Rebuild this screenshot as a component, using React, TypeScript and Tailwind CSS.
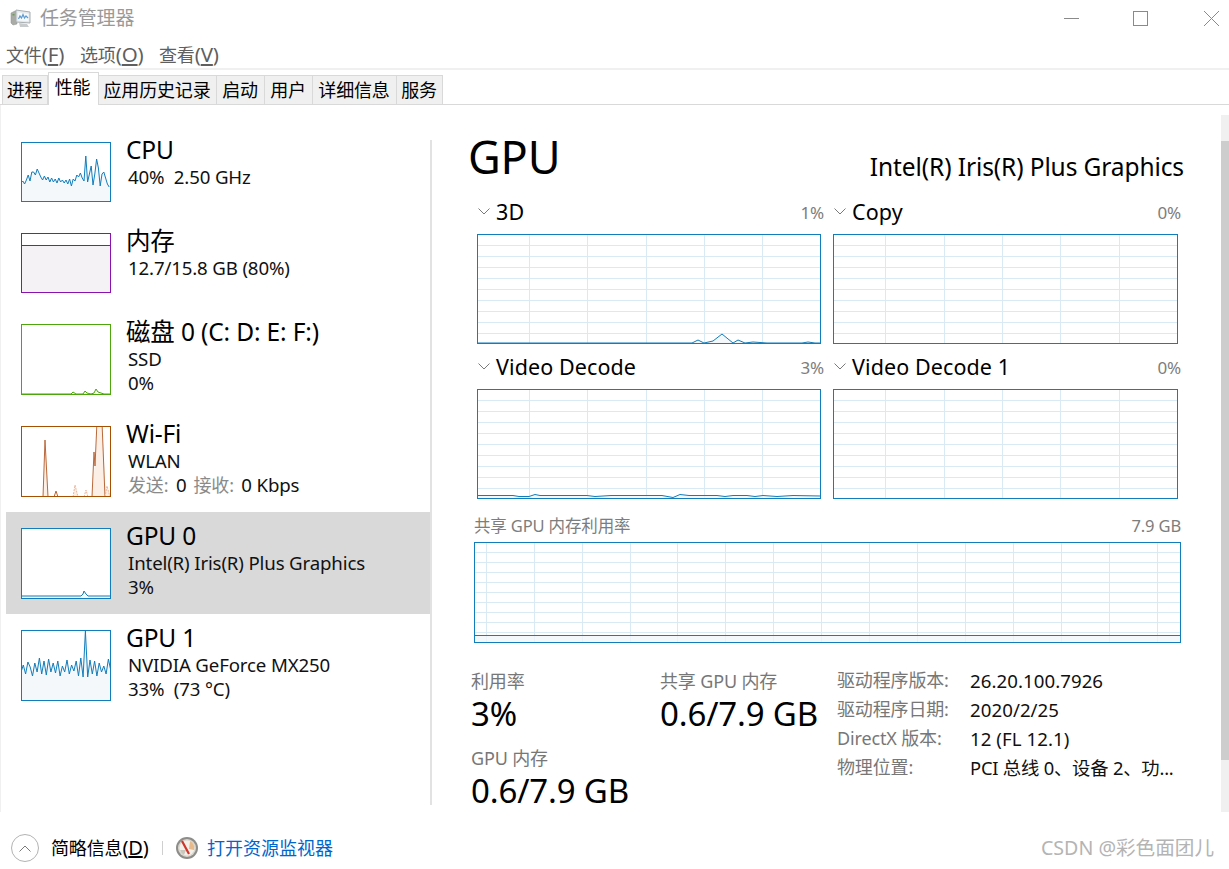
const line = (ys: number[], step: number, x0 = 0) =>
  ys.map((y, i) => `${x0 + i * step},${y}`).join(" ");

interface IGraph {
  w: number;
  h: number;
  color: string;
  fill?: string;
  rows?: number[];
  cols?: number[];
  points?: string;
  children?: React.ReactNode;
}

const Graph = ({ w, h, color, fill, rows = [], cols = [], points, children }: IGraph) => (
  <svg width={w} height={h} viewBox={`0 0 ${w} ${h}`} className="block shrink-0 bg-white">
    {rows.map((y) => (
      <line key={`r${y}`} x1={0} x2={w} y1={y + 0.5} y2={y + 0.5} stroke="#d9eaf4" />
    ))}
    {cols.map((x) => (
      <line key={`c${x}`} y1={0} y2={h} x1={x + 0.5} x2={x + 0.5} stroke="#d9eaf4" />
    ))}
    {points && fill && <polygon points={`0,${h} ${points} ${w},${h}`} fill={fill} fillOpacity={0.75} />}
    {points && <polyline points={points} fill="none" stroke={color} strokeWidth={1} />}
    {children}
    <rect x={0.5} y={0.5} width={w - 1} height={h - 1} fill="none" stroke={color} />
  </svg>
);

const BLUE = "#117dbb";
const PALE = "#f1f6fa";

const cpu = line(
  [41, 39, 42, 38, 33, 39, 30, 30, 33, 27, 31, 35, 38, 34, 38, 35, 40, 36, 40, 37, 41, 36, 40, 38, 41, 38, 42, 37, 44, 37, 39, 33, 35, 31, 36, 39, 14, 40, 32, 24, 43, 32, 17, 26, 44, 32, 30, 36, 42, 45],
  1.8
);
const gpu1 = line(
  [42, 35, 44, 32, 37, 46, 33, 42, 28, 44, 31, 45, 29, 42, 33, 43, 31, 46, 36, 42, 30, 44, 35, 41, 31, 46, 28, 47, 1, 47, 30, 44, 31, 46, 33, 42, 36, 44, 29, 40],
  2.3
);
const disk = "0,70 50,70 52,68 55,70 62,70 64,67 66,69 70,70 73,69 75,65 77,68 80,69 83,70 90,70";
const gpu0 = "0,68 60,68 62,66 63,63 65,66 67,68 90,68";
const threeD =
  "0,109 215,109 221,106 227,109 236,107 245,100 256,109 261,106 268,109 276,108 290,109 325,109 331,108 338,109 344,109";
const vd0 =
  "0,106.500 36,106.500 42,107.500 52,107.500 58,105.500 63,106.500 110,106.500 118,107.500 134,106.500 185,106.500 196,108.500 203,105.500 212,106.500 240,106.500 248,107.500 256,106.500 270,106.500 278,107.500 286,106.500 300,107.500 316,106.500 344,107";

const SIDEBAR: { title: string; lines: React.ReactNode[]; graph: React.ReactNode; selected?: boolean }[] = [
  {
    title: "CPU",
    lines: ["40%  2.50 GHz"],
    graph: <Graph w={90} h={60} color={BLUE} fill={PALE} points={cpu} />,
  },
  {
    title: "内存",
    lines: ["12.7/15.8 GB (80%)"],
    graph: (
      <Graph w={90} h={60} color="#8b12ae">
        <rect x={1} y={12} width={88} height={47} fill="#f4f2f4" />
        <line x1={0} x2={90} y1={12.5} y2={12.5} stroke="#8b12ae" />
      </Graph>
    ),
  },
  {
    title: "磁盘 0 (C: D: E: F:)",
    lines: ["SSD", "0%"],
    graph: <Graph w={90} h={71} color="#4da60c" fill="#eff7e7" points={disk} />,
  },
  {
    title: "Wi-Fi",
    lines: [
      "WLAN",
      <>
        <span className="text-[18px] text-[#8a8a8a]">发送: </span>
        <span className="ml-[3px]">0</span>
        <span className="ml-[7px] text-[18px] text-[#8a8a8a]">接收: </span>
        <span className="ml-[3px]">0 Kbps</span>
      </>,
    ],
    graph: (
      <Graph w={90} h={71} color="#a74f01">
        <polygon points="71,71 74,35 77,0 81,0 85,71" fill="#fcf0e6" />
        <polyline points="22,71 24,14 27,71" fill="#fcf0e6" stroke="#b9683a" />
        <polyline points="71,71 73,26 74,40 76,-4 81,-4 84,71" fill="none" stroke="#b9683a" />
        <polyline points="33,71 35,65 37,71" fill="none" stroke="#b9683a" />
        <polyline points="52,71 54,59 57,71" fill="#fcf0e6" stroke="#e8b59a" strokeDasharray="2 1" />
        <polyline points="63,71 65,64 67,71" fill="none" stroke="#e8b59a" strokeDasharray="2 1" />
        <polyline points="84,71 86,60 89,71" fill="#fcf0e6" stroke="#e8b59a" strokeDasharray="2 1" />
      </Graph>
    ),
  },
  {
    title: "GPU 0",
    lines: ["Intel(R) Iris(R) Plus Graphics", "3%"],
    graph: <Graph w={90} h={71} color={BLUE} fill={PALE} points={gpu0} />,
    selected: true,
  },
  {
    title: "GPU 1",
    lines: ["NVIDIA GeForce MX250", "33%  (73 °C)"],
    graph: <Graph w={90} h={71} color={BLUE} fill={PALE} points={gpu1} />,
  },
];

const TABS = [
  { label: "进程", width: "w-[46px]" },
  { label: "性能", width: "w-[51px]", active: true },
  { label: "应用历史记录", width: "w-[118px]" },
  { label: "启动", width: "w-[48px]" },
  { label: "用户", width: "w-[48px]" },
  { label: "详细信息", width: "w-[84px]" },
  { label: "服务", width: "w-[46px]" },
];

const ROWS11 = [11, 22, 33, 44, 55, 66, 77, 88, 99];
const COLS_L = [52, 110, 169, 227, 285];
const COLS_R = [52, 111, 169, 227, 286];

const ENGINES = [
  { name: "3D", value: "1%", w: 344, head: "w-[347px]", cols: COLS_L, points: threeD, fill: PALE },
  { name: "Copy", value: "0%", w: 345, head: "w-[348px]", cols: COLS_R },
  { name: "Video Decode", value: "3%", w: 344, head: "w-[347px]", cols: COLS_L, points: vd0, fill: PALE },
  { name: "Video Decode 1", value: "0%", w: 345, head: "w-[348px]", cols: COLS_R },
];

const DETAILS = [
  { k: "驱动程序版本:", v: "26.20.100.7926", cn: "text-[18.670px] tracking-[0.05px]" },
  { k: "驱动程序日期:", v: "2020/2/25", cn: "text-[18.670px] tracking-[0.05px]" },
  { k: "DirectX 版本:", v: "12 (FL 12.1)", cn: "text-[18.670px] tracking-[0.05px]" },
  { k: "物理位置:", v: "PCI 总线 0、设备 2、功...", cn: "text-[18.330px] tracking-[-0.2px]" },
];

const AppIcon = () => (
  <svg width="22" height="22" viewBox="0 0 22 22">
    <path d="M1 6 L5 4 L7 4 L7 17 L3 18 L1 16 Z" fill="#a9aca6" stroke="#8b8f88" strokeWidth="0.5" />
    <rect x="2.500" y="7" width="2" height="1.500" fill="#6f9a5c" />
    <path d="M6 3 L20 5 L20 16 L6 15 Z" fill="#e6eaed" stroke="#a8adb1" />
    <path d="M8 5.500 L18.500 7 L18.500 14 L8 13.500 Z" fill="#f6fafd" />
    <polyline points="8.500,12 10,9 11.500,11 13,7.500 14.500,11 16,9 18,11" fill="none" stroke="#5f9bd0" strokeWidth="1.200" />
    <path d="M9 16 L17 17 L19 20 L10 20 Z" fill="#c8cbcd" />
  </svg>
);

const ResMonIcon = () => (
  <svg width="24" height="24" viewBox="0 0 24 24">
    <circle cx="12" cy="12" r="11" fill="#8d8c88" />
    <circle cx="12" cy="12" r="9" fill="#d9d6ce" />
    <circle cx="12" cy="12" r="7.500" fill="#f3f0ea" />
    <path d="M15 5 A7.500 7.500 0 0 1 19 14 L14 13 Z" fill="#e8b98a" />
    <path d="M5 14 A7.500 7.500 0 0 0 9 19 L11 14 Z" fill="#c9c6bc" />
    <path d="M7 5 L14 18" stroke="#d0352a" strokeWidth="2.200" />
  </svg>
);

const Chevron = ({ up, className }: { up?: boolean; className?: string }) => (
  <svg width="12" height="7" viewBox="0 0 12 7" className={className}>
    <polyline points={up ? "0.500,6.500 6,1 11.500,6.500" : "0.500,0.500 6,6 11.500,0.500"} fill="none" stroke="#7a7a7a" />
  </svg>
);

const SidebarRow = ({ title, lines, graph, selected }: (typeof SIDEBAR)[number]) => (
  <div className={`flex gap-[15px] pt-4 pb-[15px] pl-[15px] ${selected ? "bg-[#d9d9d9]" : ""}`}>
    {graph}
    <div className="-mt-[6px] flex flex-col">
      <div className="h-[29px] text-[24.500px] leading-[28px] whitespace-nowrap text-black">{title}</div>
      {lines.map((l, i) => (
        <div key={i} className="ml-[2px] h-6 text-[18.670px] leading-6 whitespace-pre text-[#111]">
          {l}
        </div>
      ))}
    </div>
  </div>
);

const App = () => {
  return (
    <div className="relative h-[869px] w-[1229px] overflow-hidden bg-white font-['Noto_Sans','Noto_Sans_CJK_SC',sans-serif] tracking-[-0.15px]">
      {/* title bar */}
      <div className="flex h-9 items-center pl-[10px]">
        <AppIcon />
        <span className="ml-[8px] text-[19px] text-[#999]">任务管理器</span>
        <div className="ml-auto flex items-center pr-[10px]">
          <div className="h-px w-[15px] bg-[#8a8a8a]" />
          <div className="ml-[54px] h-[15px] w-[15px] border border-[#8a8a8a]" />
          <svg width="15" height="15" viewBox="0 0 15 15" className="ml-[56px]">
            <path d="M0 0 L15 15 M15 0 L0 15" stroke="#8a8a8a" />
          </svg>
        </div>
      </div>

      {/* menu */}
      <div className="flex h-[34px] items-center border-b-2 border-[#f0f0f0] pt-[4px] pl-[6px] text-[20.500px] text-[#5f5f5f]">
        <span className="w-[74px]">
          <span className="text-[18px]">文件</span>(<span className="underline">F</span>)
        </span>
        <span className="w-[79px]">
          <span className="text-[18px]">选项</span>(<span className="underline">O</span>)
        </span>
        <span>
          <span className="text-[18px]">查看</span>(<span className="underline">V</span>)
        </span>
      </div>

      {/* tabs */}
      <div className="flex h-[35px] items-end border-b border-[#d9d9d9] pl-[2px]">
        {TABS.map((t) =>
          t.active ? (
            <div
              key={t.label}
              className={`${t.width} relative z-10 -mb-px flex h-[33px] justify-center border border-b-0 border-[#d9d9d9] bg-white pt-[1px] pr-[2px] text-[18px] leading-[27px] text-black`}
            >
              {t.label}
            </div>
          ) : (
            <div
              key={t.label}
              className={`${t.width} flex h-[29px] items-center justify-center border-t border-r border-[#d9d9d9] bg-[#f0f0f0] pr-[1px] text-[18px] text-black first:border-l`}
            >
              {t.label}
            </div>
          )
        )}
      </div>

      {/* main */}
      <div className="flex h-[707px] overflow-hidden border-l border-[#f0f0f0]">
        <div className="w-[429px] shrink-0 pt-[21px] pl-[5px]">
          {SIDEBAR.map((s) => (
            <SidebarRow key={s.title} {...s} />
          ))}
        </div>
        <div className="mt-[35px] h-[665px] w-[2px] shrink-0 bg-[#e2e2e2]" />

        <div className="w-[789px] shrink-0 pt-[21px] pl-[37px]">
          <div className="flex h-[63px] w-[715px] items-start justify-between">
            <span className="mt-[1px] -ml-px text-[45px] leading-[60px] text-black">GPU</span>
            <span className="mt-[24px] text-[24.500px] leading-[34px] tracking-[-0.1px] text-black">
              Intel(R) Iris(R) Plus Graphics
            </span>
          </div>

          <div className="ml-[8px] grid w-[712px] grid-cols-[356px_356px]">
            {ENGINES.map((e) => (
              <div key={e.name}>
                <div className={`${e.head} flex h-[45px] items-center`}>
                  <Chevron className="ml-px" />
                  <span className="mt-[2px] ml-[6px] text-[21.500px] tracking-[0.1px] text-black">{e.name}</span>
                  <span className="mt-[2px] ml-auto text-[17px] text-[#7d7d7d]">{e.value}</span>
                </div>
                <Graph w={e.w} h={110} color={BLUE} rows={ROWS11} cols={e.cols} points={e.points} fill={e.fill} />
              </div>
            ))}
          </div>

          <div className="ml-[5px] flex h-[43px] w-[707px] items-end justify-between pb-[3px] text-[16.500px] text-[#7d7d7d]">
            <span>共享 GPU 内存利用率</span>
            <span>7.9 GB</span>
          </div>
          <div className="ml-[5px]">
            <Graph
              w={707}
              h={101}
              color={BLUE}
              rows={[10, 20, 30, 40, 50, 60, 70, 80, 90]}
              cols={[12, 60, 108, 156, 203, 251, 299, 347, 395, 443, 491, 539, 587, 635, 683]}
              points="0,93.500 707,93.500"
              fill={PALE}
            />
          </div>

          <div className="mt-[26px] ml-[2px] flex">
            <div className="w-[189px] shrink-0">
              <div className="h-6 text-[18px] leading-6 text-[#777]">利用率</div>
              <div className="h-[42px] text-[33px] leading-[42px] text-black">3%</div>
              <div className="mt-[11px] h-6 text-[18px] leading-6 text-[#777]">GPU 内存</div>
              <div className="h-[42px] text-[33px] leading-[42px] whitespace-nowrap text-black">0.6/7.9 GB</div>
            </div>
            <div className="w-[177px] shrink-0">
              <div className="h-6 text-[18px] leading-6 text-[#777]">共享 GPU 内存</div>
              <div className="h-[42px] text-[33px] leading-[42px] whitespace-nowrap text-black">0.6/7.9 GB</div>
            </div>
            <div className="-mt-[3px] flex flex-col">
              {DETAILS.map((d) => (
                <div key={d.k} className="flex h-[29px] items-center whitespace-nowrap">
                  <span className="w-[133px] text-[18px] text-[#777]">{d.k}</span>
                  <span className={`${d.cn} text-[#111]`}>{d.v}</span>
                </div>
              ))}
            </div>
          </div>
        </div>

        {/* scrollbar */}
        <div className="mt-[10px] flex w-2 shrink-0 flex-col bg-[#f0f0f0]">
          <div className="h-[26px]" />
          <div className="h-[619px] bg-[#cdcdcd]" />
        </div>
      </div>

      {/* footer */}
      <div className="flex h-[57px] items-center pt-[15px] pl-[11px] text-[18px]">
        <div className="flex h-[28px] w-[28px] items-center justify-center rounded-full border border-[#b3b3b3]">
          <Chevron up />
        </div>
        <span className="ml-[12px] w-[111px] whitespace-nowrap text-black">
          简略信息<span className="text-[20px]">(<span className="underline">D</span>)</span>
        </span>
        <div className="h-[14px] w-px bg-[#cfcfcf]" />
        <div className="ml-[12px]">
          <ResMonIcon />
        </div>
        <span className="ml-[8px] tracking-normal text-[#0066cc]">打开资源监视器</span>
        <span className="ml-auto pr-[15px] text-[19.600px] tracking-normal text-[#b4b4b4]">CSDN @彩色面团儿</span>
      </div>
    </div>
  );
};

export default App;
